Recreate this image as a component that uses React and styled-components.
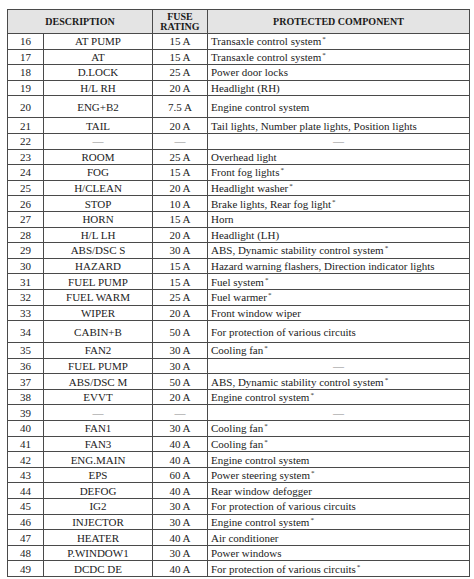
import React from 'react';
import styled, { createGlobalStyle } from 'styled-components';

const serif = '"Liberation Serif", "Times New Roman", serif';

const GlobalStyle = createGlobalStyle`
  html, body {
    margin: 0;
    padding: 0;
    background: #ffffff;
  }
  body {
    font-family: ${serif};
    color: #1c1c1c;
  }
`;

const fuses = [
  ['16', 'AT PUMP', '15 A', 'Transaxle control system', true],
  ['17', 'AT', '15 A', 'Transaxle control system', true],
  ['18', 'D.LOCK', '25 A', 'Power door locks'],
  ['19', 'H/L RH', '20 A', 'Headlight (RH)'],
  ['20', 'ENG+B2', '7.5 A', 'Engine control system', false, true],
  ['21', 'TAIL', '20 A', 'Tail lights, Number plate lights, Position lights'],
  ['22', '—', '—', '—'],
  ['23', 'ROOM', '25 A', 'Overhead light'],
  ['24', 'FOG', '15 A', 'Front fog lights', true],
  ['25', 'H/CLEAN', '20 A', 'Headlight washer', true],
  ['26', 'STOP', '10 A', 'Brake lights, Rear fog light', true],
  ['27', 'HORN', '15 A', 'Horn'],
  ['28', 'H/L LH', '20 A', 'Headlight (LH)'],
  ['29', 'ABS/DSC S', '30 A', 'ABS, Dynamic stability control system', true],
  ['30', 'HAZARD', '15 A', 'Hazard warning flashers, Direction indicator lights'],
  ['31', 'FUEL PUMP', '15 A', 'Fuel system', true],
  ['32', 'FUEL WARM', '25 A', 'Fuel warmer', true],
  ['33', 'WIPER', '20 A', 'Front window wiper'],
  ['34', 'CABIN+B', '50 A', 'For protection of various circuits', false, true],
  ['35', 'FAN2', '30 A', 'Cooling fan', true],
  ['36', 'FUEL PUMP', '30 A', '—'],
  ['37', 'ABS/DSC M', '50 A', 'ABS, Dynamic stability control system', true],
  ['38', 'EVVT', '20 A', 'Engine control system', true],
  ['39', '—', '—', '—'],
  ['40', 'FAN1', '30 A', 'Cooling fan', true],
  ['41', 'FAN3', '40 A', 'Cooling fan', true],
  ['42', 'ENG.MAIN', '40 A', 'Engine control system'],
  ['43', 'EPS', '60 A', 'Power steering system', true],
  ['44', 'DEFOG', '40 A', 'Rear window defogger'],
  ['45', 'IG2', '30 A', 'For protection of various circuits'],
  ['46', 'INJECTOR', '30 A', 'Engine control system', true],
  ['47', 'HEATER', '40 A', 'Air conditioner'],
  ['48', 'P.WINDOW1', '30 A', 'Power windows'],
  ['49', 'DCDC DE', '40 A', 'For protection of various circuits', true],
];

const Page = styled.div`
  padding: 9px 4px 3px 7px;
`;

const Table = styled.table`
  width: 463px;
  border-collapse: collapse;
  table-layout: fixed;
  border: 1.5px solid #3a3a3a;
  font-family: ${serif};
  font-size: 11px;
  color: #1c1c1c;
`;

const HeadCell = styled.th`
  background: #e4e4e4;
  border: 1px solid #4a4a4a;
  height: 23px;
  padding: 0;
  font-family: ${serif};
  font-size: 10px;
  font-weight: bold;
  line-height: 10px;
  text-align: center;
  color: #1a1a1a;
`;

const Row = styled.tr`
  height: ${(p) => (p.$tall ? '22px' : '15.6px')};
`;

const Cell = styled.td`
  border: 1px solid #4a4a4a;
  padding: 0 ${(p) => (p.$left ? '3px' : '0')};
  text-align: ${(p) => (p.$left ? 'left' : 'center')};
  white-space: nowrap;
  line-height: 12px;
  font-family: ${serif};
  color: ${(p) => (p.$dash ? '#8a8a8a' : '#1c1c1c')};
`;

const Star = styled.sup`
  font-size: 7px;
  line-height: 0;
  vertical-align: 4px;
  margin-left: 1px;
`;

const FuseRow = ({ fuse }) => {
  const [no, name, rating, comp, star, tall] = fuse;
  const compDash = comp === '—';
  return (
    <Row $tall={tall}>
      <Cell>{no}</Cell>
      <Cell $dash={name === '—'}>{name}</Cell>
      <Cell $dash={rating === '—'}>{rating}</Cell>
      <Cell $left={!compDash} $dash={compDash}>
        {comp}
        {star && <Star>*</Star>}
      </Cell>
    </Row>
  );
};

const App = () => (
  <>
    <GlobalStyle />
    <Page>
      <Table>
        <colgroup>
          <col style={{ width: '36px' }} />
          <col style={{ width: '109px' }} />
          <col style={{ width: '55px' }} />
          <col />
        </colgroup>
        <thead>
          <tr>
            <HeadCell colSpan={2}>DESCRIPTION</HeadCell>
            <HeadCell>
              FUSE
              <br />
              RATING
            </HeadCell>
            <HeadCell>PROTECTED COMPONENT</HeadCell>
          </tr>
        </thead>
        <tbody>
          {fuses.map((f) => (
            <FuseRow key={f[0]} fuse={f} />
          ))}
        </tbody>
      </Table>
    </Page>
  </>
);

export default App;
